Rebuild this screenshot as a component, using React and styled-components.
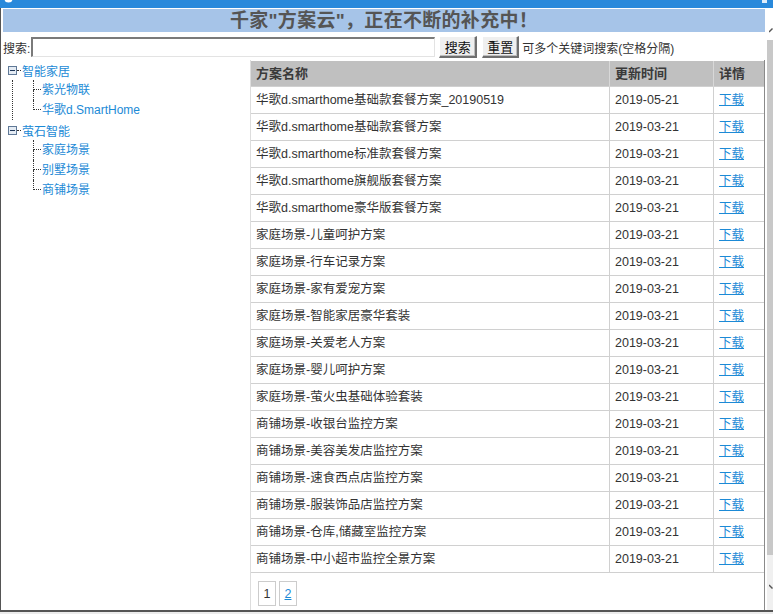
import React from 'react';
import styled, { createGlobalStyle } from 'styled-components';

const GlobalStyle = createGlobalStyle`
    html, body {
        margin: 0;
        padding: 0;
        background: #fff;
    }
    body {
        width: 773px;
        height: 614px;
        overflow: hidden;
        font-family: "Liberation Sans", "Noto Sans CJK SC", sans-serif;
        font-size: 12px;
        color: #333;
    }
`;

const Window = styled.div`
    width: 773px;
    height: 614px;
    display: flex;
    flex-direction: column;
    overflow: hidden;
`;

const TitleBar = styled.div`
    flex: none;
    height: 8px;
    background: #2989db;
    display: flex;
    justify-content: space-between;
    align-items: flex-start;
    padding: 0 6px 0 4px;
`;

const Body = styled.div`
    flex: 1;
    min-height: 0;
    display: flex;
`;

const Content = styled.div`
    flex: 1;
    min-width: 0;
    display: flex;
    flex-direction: column;
    border-left: 1px solid #555;
`;

const Banner = styled.div`
    margin: 1px 2px 0;
    height: 23px;
    line-height: 23px;
    background: #a6c4e8;
    color: #555;
    font-size: 19px;
    font-weight: bold;
    text-align: center;
    letter-spacing: 0.3px;
`;

const SearchRow = styled.div`
    margin-top: 4px;
    height: 22px;
    display: flex;
    align-items: center;
    padding-left: 2px;
    white-space: nowrap;
`;

const SearchInput = styled.input`
    box-sizing: border-box;
    width: 404px;
    height: 20px;
    margin: 0 0 0 1px;
    border-top: 2px solid #7a7a7a;
    border-left: 2px solid #7a7a7a;
    border-right: 1px solid #e3e3e3;
    border-bottom: 1px solid #e3e3e3;
    outline: none;
`;

const Button = styled.button`
    box-sizing: border-box;
    width: ${(props) => props.$w}px;
    height: 22px;
    margin-left: ${(props) => props.$gap}px;
    padding: 0;
    background: #efefef;
    border-top: 1px solid #fff;
    border-left: 1px solid #fff;
    border-right: 2px solid #6f6f6f;
    border-bottom: 2px solid #6f6f6f;
    box-shadow: inset -1px -1px 0 #bdbdbd;
    font-family: inherit;
    font-size: 13px;
    color: #111;
`;

const Hint = styled.span`
    margin-left: 3px;
    color: #333;
`;

const Main = styled.div`
    flex: 1;
    min-height: 0;
    display: flex;
    margin-top: 2px;
    padding-right: 2px;
`;

const Tree = styled.div`
    flex: none;
    width: 249px;
    color: #1c8ad6;
`;

const TreeRow = styled.div`
    height: 20px;
    display: flex;
    align-items: center;
    padding-left: 7px;
`;

const Dash = styled.span`
    width: 4px;
    border-top: 1px dotted #333;
`;

const Label = styled.span`
    margin-left: 1px;
    white-space: nowrap;
`;

const ChildGroup = styled.div`
    margin-left: 11px;
    padding-left: 20px;
    border-left: 1px dotted ${(props) => (props.$line ? '#333' : 'transparent')};
`;

const ChildRow = styled.div`
    height: 20px;
    display: flex;
`;

const Connector = styled.span`
    width: 8px;
    height: 20px;
    display: flex;
    flex-direction: column;
`;

const ConnTop = styled.span`
    box-sizing: border-box;
    height: 10px;
    border-left: 1px dotted #333;
    border-bottom: 1px dotted #333;
`;

const ConnBottom = styled.span`
    flex: 1;
    border-left: 1px dotted ${(props) => (props.$last ? 'transparent' : '#333')};
`;

const ChildLabel = styled.span`
    margin-left: 1px;
    line-height: 20px;
    white-space: nowrap;
`;

const Pane = styled.div`
    flex: 1;
    min-width: 0;
    border-left: 1px solid #ddd;
    border-right: 1px solid #8a8a8a;
    padding-top: 1px;
`;

const Table = styled.table`
    width: 100%;
    table-layout: fixed;
    border-collapse: separate;
    border-spacing: 0;
    font-size: 12.5px;
    color: #333;
`;

const Th = styled.th`
    padding: 0 5px;
    line-height: 25px;
    background: #c0c0c0;
    color: #3a3a3a;
    font-size: 13px;
    font-weight: bold;
    text-align: left;
    border-bottom: 1px solid #d0d0d0;
    border-right: ${(props) => (props.$last ? 'none' : '1px solid #d8d8d8')};
`;

const Td = styled.td`
    padding: 0 5px;
    line-height: 26px;
    white-space: nowrap;
    overflow: hidden;
    border-bottom: 1px solid #d0d0d0;
    border-right: ${(props) => (props.$last ? 'none' : '1px solid #d0d0d0')};
`;

const Link = styled.a`
    color: #1c8ad6;
    text-decoration: underline;
`;

const Pager = styled.div`
    display: flex;
    gap: 3px;
    margin: 8px 0 0 7px;
`;

const PageBox = styled.span`
    box-sizing: border-box;
    width: 18px;
    height: 25px;
    display: flex;
    align-items: center;
    justify-content: center;
    border: 1px solid #ccc;
    font-size: 12.5px;
    color: #333;
`;

const Scrollbar = styled.div`
    flex: none;
    width: 6px;
    display: flex;
    flex-direction: column;
    background: #f0f0f0;
`;

const ScrollEnd = styled.div`
    height: ${(props) => props.$h}px;
    background: ${(props) => props.$bg};
    display: flex;
    justify-content: flex-end;
    padding-top: ${(props) => props.$pad}px;
    box-sizing: border-box;
`;

const Thumb = styled.div`
    height: 515px;
    background: #c8c8c8;
`;

const BottomEdge = styled.div`
    flex: none;
    height: 4px;
    border-top: 2px solid #555;
    box-sizing: border-box;
    background: #ececec;
`;

const MinusBox = () => (
    <svg width="9" height="9" viewBox="0 0 9 9">
        <rect x="0.5" y="0.5" width="8" height="8" fill="#e4ebf3" stroke="#5f7896" />
        <path d="M2 4.5h5" stroke="#1d3557" />
    </svg>
);

const tree = [
    { name: '智能家居', children: ['紫光物联', '华歌d.SmartHome'] },
    { name: '萤石智能', children: ['家庭场景', '别墅场景', '商铺场景'] },
];

const rows = [
    ['华歌d.smarthome基础款套餐方案_20190519', '2019-05-21'],
    ['华歌d.smarthome基础款套餐方案', '2019-03-21'],
    ['华歌d.smarthome标准款套餐方案', '2019-03-21'],
    ['华歌d.smarthome旗舰版套餐方案', '2019-03-21'],
    ['华歌d.smarthome豪华版套餐方案', '2019-03-21'],
    ['家庭场景-儿童呵护方案', '2019-03-21'],
    ['家庭场景-行车记录方案', '2019-03-21'],
    ['家庭场景-家有爱宠方案', '2019-03-21'],
    ['家庭场景-智能家居豪华套装', '2019-03-21'],
    ['家庭场景-关爱老人方案', '2019-03-21'],
    ['家庭场景-婴儿呵护方案', '2019-03-21'],
    ['家庭场景-萤火虫基础体验套装', '2019-03-21'],
    ['商铺场景-收银台监控方案', '2019-03-21'],
    ['商铺场景-美容美发店监控方案', '2019-03-21'],
    ['商铺场景-速食西点店监控方案', '2019-03-21'],
    ['商铺场景-服装饰品店监控方案', '2019-03-21'],
    ['商铺场景-仓库,储藏室监控方案', '2019-03-21'],
    ['商铺场景-中小超市监控全景方案', '2019-03-21'],
];

export default function App() {
    return (
        <>
            <GlobalStyle />
            <Window>
                <TitleBar>
                    <svg width="9" height="3" viewBox="0 0 9 3">
                        <ellipse cx="4.5" cy="-1" rx="4" ry="3.5" fill="#fff" />
                    </svg>
                    <svg width="5" height="3" viewBox="0 0 5 3">
                        <rect x="0" y="0" width="5" height="3" fill="#fff" opacity="0.85" />
                    </svg>
                </TitleBar>
                <Body>
                    <Content>
                        <Banner>千家"方案云"，正在不断的补充中！</Banner>
                        <SearchRow>
                            搜索:
                            <SearchInput type="text" />
                            <Button $w={38} $gap={4}>搜索</Button>
                            <Button $w={37} $gap={5}>重置</Button>
                            <Hint>可多个关键词搜索(空格分隔)</Hint>
                        </SearchRow>
                        <Main>
                            <Tree>
                                {tree.map((node, i) => (
                                    <div key={node.name}>
                                        <TreeRow>
                                            <MinusBox />
                                            <Dash />
                                            <Label>{node.name}</Label>
                                        </TreeRow>
                                        <ChildGroup $line={i < tree.length - 1}>
                                            {node.children.map((child, j) => (
                                                <ChildRow key={child}>
                                                    <Connector>
                                                        <ConnTop />
                                                        <ConnBottom $last={j === node.children.length - 1} />
                                                    </Connector>
                                                    <ChildLabel>{child}</ChildLabel>
                                                </ChildRow>
                                            ))}
                                        </ChildGroup>
                                    </div>
                                ))}
                            </Tree>
                            <Pane>
                                <Table>
                                    <colgroup>
                                        <col style={{ width: 359 }} />
                                        <col style={{ width: 104 }} />
                                        <col />
                                    </colgroup>
                                    <thead>
                                        <tr>
                                            <Th>方案名称</Th>
                                            <Th>更新时间</Th>
                                            <Th $last>详情</Th>
                                        </tr>
                                    </thead>
                                    <tbody>
                                        {rows.map(([name, date]) => (
                                            <tr key={name}>
                                                <Td>{name}</Td>
                                                <Td>{date}</Td>
                                                <Td $last>
                                                    <Link href="#">下载</Link>
                                                </Td>
                                            </tr>
                                        ))}
                                    </tbody>
                                </Table>
                                <Pager>
                                    <PageBox>1</PageBox>
                                    <PageBox>
                                        <Link href="#">2</Link>
                                    </PageBox>
                                </Pager>
                            </Pane>
                        </Main>
                    </Content>
                    <Scrollbar>
                        <ScrollEnd $h={32} $bg="#fff" $pad={19}>
                            <svg width="4" height="6" viewBox="0 0 4 6">
                                <path d="M0 5L3.5 1.5" stroke="#555" strokeWidth="1.5" fill="none" />
                            </svg>
                        </ScrollEnd>
                        <Thumb />
                        <ScrollEnd $h={55} $bg="#f0f0f0" $pad={29}>
                            <svg width="4" height="6" viewBox="0 0 4 6">
                                <path d="M0 1L3.5 4.5" stroke="#555" strokeWidth="1.5" fill="none" />
                            </svg>
                        </ScrollEnd>
                    </Scrollbar>
                </Body>
                <BottomEdge />
            </Window>
        </>
    );
}
